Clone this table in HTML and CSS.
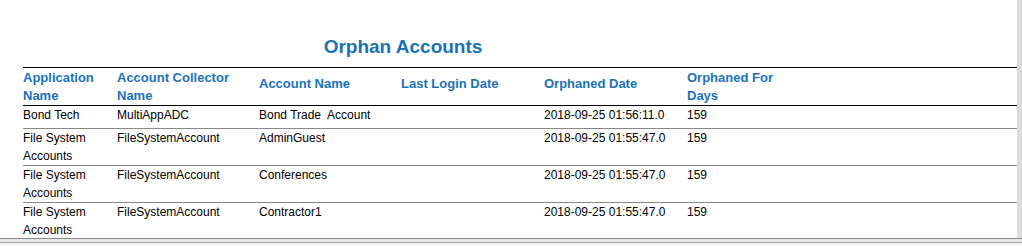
FILE: index.html
```html
<!DOCTYPE html>
<html>
<head>
<meta charset="utf-8">
<link rel="stylesheet" href="styles.css">
</head>
<body>
<div class="viewport">
  <div class="main">
    <div class="content">
      <div class="title">Orphan Accounts</div>
      <table class="report">
        <colgroup>
          <col class="c1"><col class="c2"><col class="c3"><col class="c4"><col class="c5"><col class="c6"><col>
        </colgroup>
        <thead>
          <tr>
            <th>Application Name</th>
            <th>Account Collector Name</th>
            <th class="one">Account Name</th>
            <th class="one">Last Login Date</th>
            <th class="one">Orphaned Date</th>
            <th>Orphaned For Days</th>
            <th></th>
          </tr>
        </thead>
        <tbody>
          <tr class="short">
            <td>Bond Tech</td>
            <td>MultiAppADC</td>
            <td>Bond Trade&nbsp; Account</td>
            <td></td>
            <td>2018-09-25 01:56:11.0</td>
            <td>159</td>
            <td></td>
          </tr>
          <tr>
            <td>File System Accounts</td>
            <td>FileSystemAccount</td>
            <td>AdminGuest</td>
            <td></td>
            <td>2018-09-25 01:55:47.0</td>
            <td>159</td>
            <td></td>
          </tr>
          <tr>
            <td>File System Accounts</td>
            <td>FileSystemAccount</td>
            <td>Conferences</td>
            <td></td>
            <td>2018-09-25 01:55:47.0</td>
            <td>159</td>
            <td></td>
          </tr>
          <tr>
            <td>File System Accounts</td>
            <td>FileSystemAccount</td>
            <td>Contractor1</td>
            <td></td>
            <td>2018-09-25 01:55:47.0</td>
            <td>159</td>
            <td></td>
          </tr>
        </tbody>
      </table>
    </div>
    <div class="vscroll"></div>
  </div>
  <div class="hscroll"></div>
</div>
</body>
</html>
```
FILE: styles.css
```css
html, body {
  margin: 0;
  padding: 0;
  background: #fff;
  overflow: hidden;
}
.viewport {
  width: 1022px;
  height: 246px;
  display: flex;
  flex-direction: column;
  font-family: "Liberation Sans", Arial, sans-serif;
}
.main {
  flex: 1;
  display: flex;
  min-height: 0;
}
.content {
  flex: 1;
  padding: 35px 0 0 23px;
  overflow: hidden;
}
.vscroll {
  width: 5px;
  background: #dcdcdc;
}
.hscroll {
  height: 7px;
  border-top: 1px solid #888;
  background: linear-gradient(#e8e8e8 0 3px, #a8a8a8 3px 4px, #f2f2f2 4px);
}
.title {
  width: 760px;
  text-align: center;
  font-size: 19px;
  line-height: 23px;
  font-weight: bold;
  color: #1a72b5;
  margin-bottom: 9px;
}
.report {
  width: 100%;
  table-layout: fixed;
  border-collapse: collapse;
}
.c1 { width: 94px; }
.c2 { width: 142px; }
.c3 { width: 142px; }
.c4 { width: 143px; }
.c5 { width: 143px; }
.c6 { width: 110px; }
.report thead tr {
  border-top: 1px solid #000;
  border-bottom: 1px solid #000;
}
.report th {
  height: 37px;
  padding: 0;
  text-align: left;
  vertical-align: middle;
  font-size: 13px;
  line-height: 18px;
  font-weight: bold;
  color: #1a72b5;
}
.report th.one {
  height: auto;
  vertical-align: top;
  padding-top: 7px;
}
.report td {
  padding: 0;
  vertical-align: top;
  font-size: 12px;
  line-height: 18px;
  color: #000;
}
.report tbody tr {
  border-bottom: 1px solid #888;
}
.report tbody tr.short td {
  height: 22px;
}
```
